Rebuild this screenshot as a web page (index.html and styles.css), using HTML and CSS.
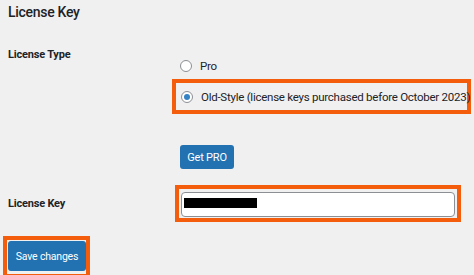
FILE: index.html
```html
<!DOCTYPE html>
<html>
<head>
<meta charset="utf-8">
<link rel="stylesheet" href="styles.css">
</head>
<body>
<div class="wrap">
  <h2 class="title">License Key</h2>
  <div class="row row-type">
    <div class="th">License Type</div>
    <div class="td">
      <label class="opt opt-pro"><span class="radio"></span><span>Pro</span></label>
      <div class="hl hl-old">
        <label class="opt"><span class="radio checked"></span><span>Old-Style (license keys purchased before October 2023)</span></label>
      </div>
      <button class="btn btn-pro">Get PRO</button>
    </div>
  </div>
  <div class="row row-key">
    <div class="th">License Key</div>
    <div class="td">
      <div class="hl hl-key">
        <div class="input"><span class="redact"></span></div>
      </div>
    </div>
  </div>
  <div class="submit">
    <div class="hl hl-save"><button class="btn btn-save">Save changes</button></div>
  </div>
</div>
</body>
</html>
```
FILE: styles.css
```css
html, body { margin: 0; padding: 0; }
body {
  background: #f0f0f1;
  font-family: Roboto, "Noto Sans", sans-serif;
  color: #1d2327;
  width: 474px;
  height: 275px;
  overflow: hidden;
}
.wrap { padding: 0 0 0 8px; }
.title {
  margin: 0;
  padding-top: 3px;
  font-size: 14px;
  letter-spacing: -0.3px;
  font-weight: 500;
  line-height: 19px;
  height: 19px;
  white-space: nowrap;
}
.row { display: grid; grid-template-columns: 164px 1fr; }
.th { font-size: 11px; letter-spacing: -0.2px; font-weight: 700; line-height: 16px; white-space: nowrap; }
.row-type { margin-top: 25px; }
.td { display: flex; flex-direction: column; align-items: flex-start; }
.opt { display: flex; align-items: center; gap: 8px; font-size: 11.5px; letter-spacing: -0.25px; line-height: 16px; white-space: nowrap; }
.opt-pro { margin-top: 11px; margin-left: 8px; }
.radio {
  width: 10px; height: 10px; border: 1px solid #8c8f94; border-radius: 50%;
  background: #fff; position: relative; flex: none;
}
.radio.checked::after {
  content: ""; position: absolute; left: 2px; top: 2px; width: 6px; height: 6px;
  border-radius: 50%; background: #3582c4;
}
.hl { border: 4px solid #f45d0c; box-sizing: border-box; }
.hl-old { margin-top: 5px; width: 299px; height: 35px; padding: 0 0 0 5px; display: flex; align-items: center; }
.btn {
  border: 0; background: #2271b1; color: #fff; font-family: inherit;
  font-size: 11px; letter-spacing: -0.2px; border-radius: 3px; padding: 0; cursor: pointer; white-space: nowrap;
}
.btn-pro { margin-top: 31px; margin-left: 8px; width: 54px; height: 24px; }
.row-key { margin-top: 16px; }
.row-key .th { padding-top: 11px; }
.hl-key { margin-left: 3px; width: 286px; height: 37px; padding: 3px 2px; }
.input {
  box-sizing: border-box; height: 25px; border: 1px solid #8c8f94; border-radius: 4px;
  background: #fff; padding: 4px 2px; display: flex;
}
.redact { width: 73px; height: 10px; background: #000; margin-top: 1px; }
.submit { margin-top: 14px; margin-left: -5px; }
.hl-save { width: 87px; height: 42px; padding: 1px 0 0 1px; }
.btn-save { width: 78px; height: 30px; font-size: 10.5px; }
```
